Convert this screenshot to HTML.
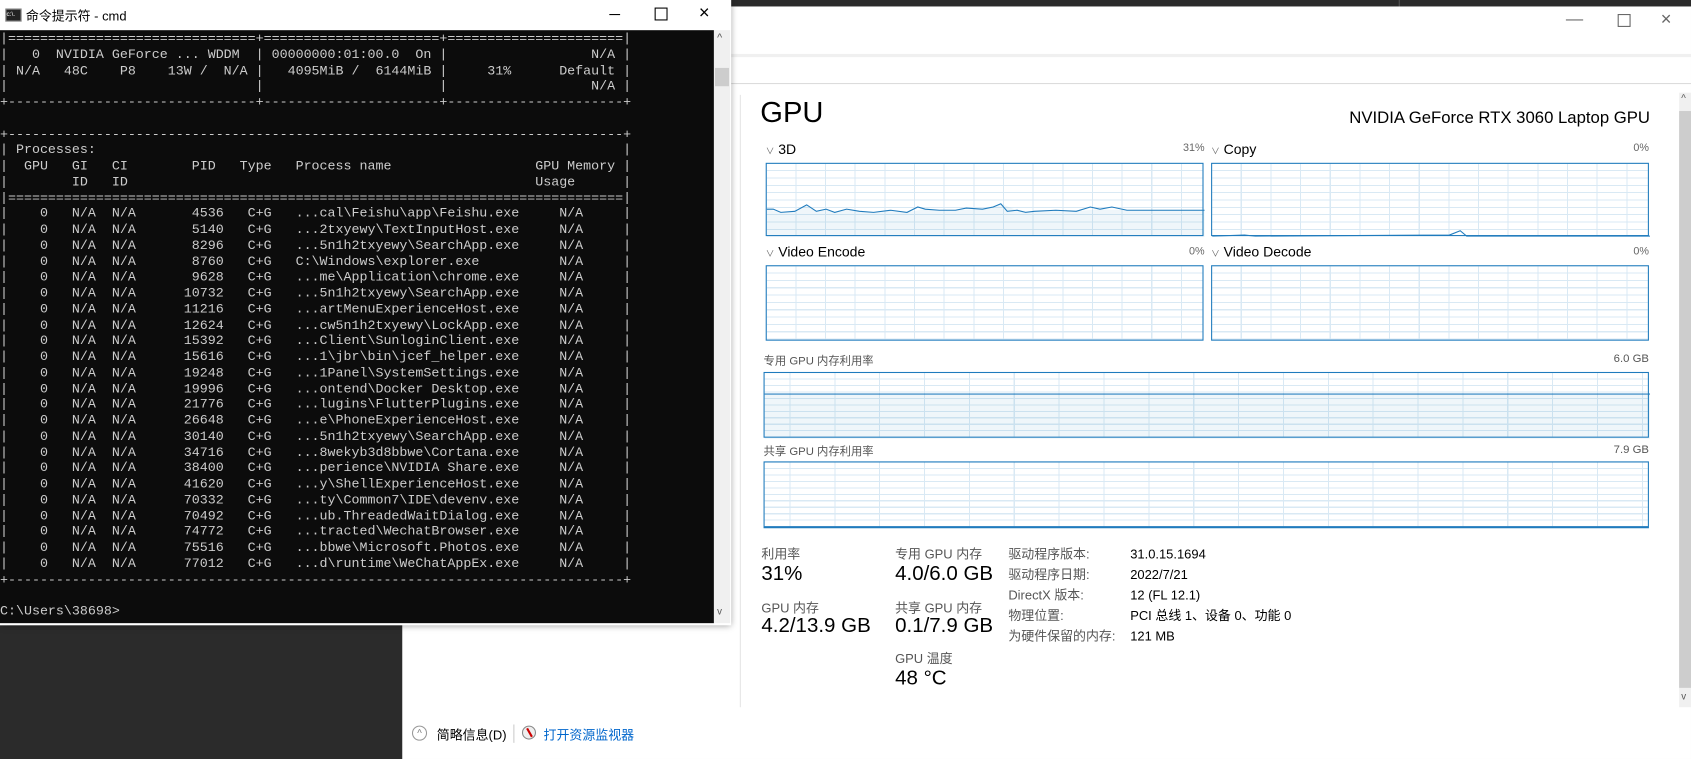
<!DOCTYPE html>
<html><head><meta charset="utf-8"><style>
html,body{margin:0;padding:0;width:1691px;height:759px;overflow:hidden;background:#2b2b2b}
#w{position:absolute;left:0;top:0;width:1568px;height:704px;transform-origin:0 0;transform:scale(1.07844,1.07812);font-family:"Liberation Sans","Noto Sans CJK SC",sans-serif}
.a{position:absolute}
.lbl{font-size:12px;color:#555;white-space:nowrap}
.big{font-size:19px;color:#000;white-space:nowrap}
.g{position:absolute;border:1px solid #1f7bbd;box-sizing:border-box;background-color:#fff;
background-image:repeating-linear-gradient(to right,transparent 0,transparent 26.5px,#d9e9f4 26.5px,#d9e9f4 27.5px),repeating-linear-gradient(to bottom,transparent 0,transparent 5.8px,#d9e9f4 5.8px,#d9e9f4 6.8px)}
.gm{background-image:repeating-linear-gradient(to right,transparent 0,transparent 23px,#d9e9f4 23px,#d9e9f4 24px,transparent 24px,transparent 41.6px),repeating-linear-gradient(to bottom,transparent 0,transparent 5px,#d9e9f4 5px,#d9e9f4 6px)}
pre{margin:0;font-family:"Liberation Mono",monospace;font-size:12.35px;line-height:14.75px;color:#cccccc}
</style></head><body><div id="w">
<div class="a" style="left:0;top:0;width:1568px;height:6px;background:#2b2b2b"></div>
<div class="a" style="left:1297px;top:0;width:1px;height:6px;background:#555"></div>
<div class="a" style="left:373px;top:6px;width:1195px;height:698px;background:#fff"></div>
<div class="a" style="left:1452px;top:18px;width:16px;height:1px;background:#666"></div>
<div class="a" style="left:1500px;top:13px;width:10px;height:10px;border:1px solid #666"></div>
<div class="a" style="left:1540px;top:8px;font-size:17px;color:#666">×</div>
<div class="a" style="left:373px;top:50px;width:1195px;height:3px;background:#f0f0f0"></div>
<div class="a" style="left:373px;top:77px;width:1195px;height:1px;background:#dcdcdc"></div>
<div class="a" style="left:686px;top:88px;width:1px;height:568px;background:#e6e6e6"></div>
<div class="a" style="left:1557px;top:86px;width:11px;height:570px;background:#f0f0f0"></div>
<div class="a" style="left:1557px;top:103px;width:11px;height:535px;background:#cdcdcd"></div>
<div class="a" style="left:1559px;top:86px;font-size:9px;color:#555">^</div>
<div class="a" style="left:1559px;top:641px;font-size:9px;color:#555">v</div>

<div class="a" style="left:705px;top:89px;font-size:27px;color:#000">GPU</div>
<div class="a" style="right:38px;top:101px;font-size:15.5px;color:#000;white-space:nowrap">NVIDIA GeForce RTX 3060 Laptop GPU</div>

<div class="a" style="left:710px;top:131px;font-size:13px;color:#000"><span style="font-size:8px;color:#666">∨</span> 3D</div>
<div class="a" style="left:1090px;top:132px;width:27px;text-align:right;font-size:10px;color:#666">31%</div>
<div class="a" style="left:1123px;top:131px;font-size:13px;color:#000"><span style="font-size:8px;color:#666">∨</span> Copy</div>
<div class="a" style="left:1500px;top:132px;width:29px;text-align:right;font-size:10px;color:#666">0%</div>
<div class="g" style="left:710px;top:151px;width:406px;height:68px"><svg width="406" height="68" style="position:absolute;left:0;top:0"><polygon fill="rgba(31,123,189,0.07)" points="0,42 13,45 26,44 37,38 46,44 55,42 63,45 74,42 86,44 99,45 115,43 130,45 147,42 160,43 175,43 200,42 217,37 232,43 248,44 268,43 287,44 309,42 334,43 368,43 406,43 406,68 0,68"/><polyline fill="none" stroke="#1f7bbd" stroke-width="1" points="0,42 6,42 13,45 26,44 37,38 46,44 55,42 63,45 74,42 86,44 99,45 115,43 130,45 140,40 147,42 160,43 175,43 185,41 200,42 210,40 217,37 223,44 232,43 240,45 248,44 268,43 287,44 300,40 309,42 320,40 334,43 368,43 406,43"/></svg></div>
<div class="g" style="left:1123px;top:151px;width:406px;height:68px"><svg width="406" height="68" style="position:absolute;left:0;top:0"><polyline fill="none" stroke="#1f7bbd" stroke-width="1" points="0,67 30,66 40,67 220,66 230,62 236,67 406,67"/></svg></div>

<div class="a" style="left:710px;top:226px;font-size:13px;color:#000"><span style="font-size:8px;color:#666">∨</span> Video Encode</div>
<div class="a" style="left:1090px;top:228px;width:27px;text-align:right;font-size:10px;color:#666">0%</div>
<div class="a" style="left:1123px;top:226px;font-size:13px;color:#000"><span style="font-size:8px;color:#666">∨</span> Video Decode</div>
<div class="a" style="left:1500px;top:228px;width:29px;text-align:right;font-size:10px;color:#666">0%</div>
<div class="g" style="left:710px;top:246px;width:406px;height:70px"></div>
<div class="g" style="left:1123px;top:246px;width:406px;height:70px"></div>

<div class="a lbl" style="left:708px;top:327px;font-size:10.5px">专用 GPU 内存利用率</div>
<div class="a lbl" style="left:1480px;top:327px;width:49px;text-align:right;font-size:10.5px">6.0 GB</div>
<div class="g gm" style="left:708px;top:345px;width:821px;height:61px"><div class="a" style="left:0;top:19px;width:821px;height:41px;background:rgba(31,123,189,0.07);border-top:1px solid #1f7bbd"></div></div>
<div class="a lbl" style="left:708px;top:411px;font-size:10.5px">共享 GPU 内存利用率</div>
<div class="a lbl" style="left:1480px;top:411px;width:49px;text-align:right;font-size:10.5px">7.9 GB</div>
<div class="g gm" style="left:708px;top:428px;width:821px;height:62px;border-bottom:2px solid #1f7bbd"></div>

<div class="a lbl" style="left:706px;top:505px">利用率</div>
<div class="a big" style="left:706px;top:522px">31%</div>
<div class="a lbl" style="left:706px;top:555px">GPU 内存</div>
<div class="a big" style="left:706px;top:570px">4.2/13.9 GB</div>
<div class="a lbl" style="left:830px;top:505px">专用 GPU 内存</div>
<div class="a big" style="left:830px;top:522px">4.0/6.0 GB</div>
<div class="a lbl" style="left:830px;top:555px">共享 GPU 内存</div>
<div class="a big" style="left:830px;top:570px">0.1/7.9 GB</div>
<div class="a lbl" style="left:830px;top:602px">GPU 温度</div>
<div class="a big" style="left:830px;top:619px">48 °C</div>
<div class="a lbl" style="left:935px;top:505px;line-height:19px">驱动程序版本:<br>驱动程序日期:<br>DirectX 版本:<br>物理位置:<br>为硬件保留的内存:</div>
<div class="a lbl" style="left:1048px;top:505px;line-height:19px;color:#000">31.0.15.1694<br>2022/7/21<br>12 (FL 12.1)<br>PCI 总线 1、设备 0、功能 0<br>121 MB</div>

<div class="a" style="left:382px;top:673px;width:14px;height:14px;border:1px solid #999;border-radius:50%;box-sizing:border-box;font-size:9px;color:#777;text-align:center;line-height:13px">^</div>
<div class="a" style="left:405px;top:673px;font-size:12px;color:#000">简略信息(D)</div>
<div class="a" style="left:476px;top:672px;width:1px;height:17px;background:#ccc"></div>
<div class="a" style="left:484px;top:673px;width:13px;height:13px;border:1px solid #888;border-radius:50%;box-sizing:border-box;background:#eee"><div class="a" style="left:5px;top:1px;width:2px;height:9px;background:#c00;transform:rotate(-30deg)"></div></div>
<div class="a" style="left:504px;top:673px;font-size:12px;color:#0066cc">打开资源监视器</div>

<div class="a" style="left:0;top:0;width:678px;height:580px;background:#fff;box-shadow:0 0 6px rgba(0,0,0,.4)"></div>
<div class="a" style="left:5px;top:8px;width:13px;height:10px;background:#222;border:1px solid #888;font-size:6px;color:#fff;line-height:10px">c:\.</div>
<div class="a" style="left:24px;top:6px;font-size:12px;color:#000">命令提示符 - cmd</div>
<div class="a" style="left:565px;top:13px;width:10px;height:1px;background:#000"></div>
<div class="a" style="left:607px;top:7px;width:10px;height:10px;border:1px solid #000"></div>
<div class="a" style="left:648px;top:2px;font-size:17px;color:#000">×</div>
<div class="a" style="left:0;top:28px;width:662px;height:550px;background:#0c0c0c;overflow:hidden">
<pre style="position:absolute;left:0;top:1px">|===============================+======================+======================|
|   0  NVIDIA GeForce ... WDDM  | 00000000:01:00.0  On |                  N/A |
| N/A   48C    P8    13W /  N/A |   4095MiB /  6144MiB |     31%      Default |
|                               |                      |                  N/A |
+-------------------------------+----------------------+----------------------+

+-----------------------------------------------------------------------------+
| Processes:                                                                  |
|  GPU   GI   CI        PID   Type   Process name                  GPU Memory |
|        ID   ID                                                   Usage      |
|=============================================================================|
|    0   N/A  N/A       4536   C+G   ...cal\Feishu\app\Feishu.exe     N/A     |
|    0   N/A  N/A       5140   C+G   ...2txyewy\TextInputHost.exe     N/A     |
|    0   N/A  N/A       8296   C+G   ...5n1h2txyewy\SearchApp.exe     N/A     |
|    0   N/A  N/A       8760   C+G   C:\Windows\explorer.exe          N/A     |
|    0   N/A  N/A       9628   C+G   ...me\Application\chrome.exe     N/A     |
|    0   N/A  N/A      10732   C+G   ...5n1h2txyewy\SearchApp.exe     N/A     |
|    0   N/A  N/A      11216   C+G   ...artMenuExperienceHost.exe     N/A     |
|    0   N/A  N/A      12624   C+G   ...cw5n1h2txyewy\LockApp.exe     N/A     |
|    0   N/A  N/A      15392   C+G   ...Client\SunloginClient.exe     N/A     |
|    0   N/A  N/A      15616   C+G   ...1\jbr\bin\jcef_helper.exe     N/A     |
|    0   N/A  N/A      19248   C+G   ...1Panel\SystemSettings.exe     N/A     |
|    0   N/A  N/A      19996   C+G   ...ontend\Docker Desktop.exe     N/A     |
|    0   N/A  N/A      21776   C+G   ...lugins\FlutterPlugins.exe     N/A     |
|    0   N/A  N/A      26648   C+G   ...e\PhoneExperienceHost.exe     N/A     |
|    0   N/A  N/A      30140   C+G   ...5n1h2txyewy\SearchApp.exe     N/A     |
|    0   N/A  N/A      34716   C+G   ...8wekyb3d8bbwe\Cortana.exe     N/A     |
|    0   N/A  N/A      38400   C+G   ...perience\NVIDIA Share.exe     N/A     |
|    0   N/A  N/A      41620   C+G   ...y\ShellExperienceHost.exe     N/A     |
|    0   N/A  N/A      70332   C+G   ...ty\Common7\IDE\devenv.exe     N/A     |
|    0   N/A  N/A      70492   C+G   ...ub.ThreadedWaitDialog.exe     N/A     |
|    0   N/A  N/A      74772   C+G   ...tracted\WechatBrowser.exe     N/A     |
|    0   N/A  N/A      75516   C+G   ...bbwe\Microsoft.Photos.exe     N/A     |
|    0   N/A  N/A      77012   C+G   ...d\runtime\WeChatAppEx.exe     N/A     |
+-----------------------------------------------------------------------------+

C:\Users\38698&gt;</pre></div>
<div class="a" style="left:662px;top:28px;width:15px;height:550px;background:#f0f0f0"></div>
<div class="a" style="left:665px;top:30px;font-size:10px;color:#555">^</div>
<div class="a" style="left:663px;top:63px;width:13px;height:17px;background:#cdcdcd"></div>
<div class="a" style="left:665px;top:562px;font-size:9px;color:#555">v</div>
</div></body></html>
